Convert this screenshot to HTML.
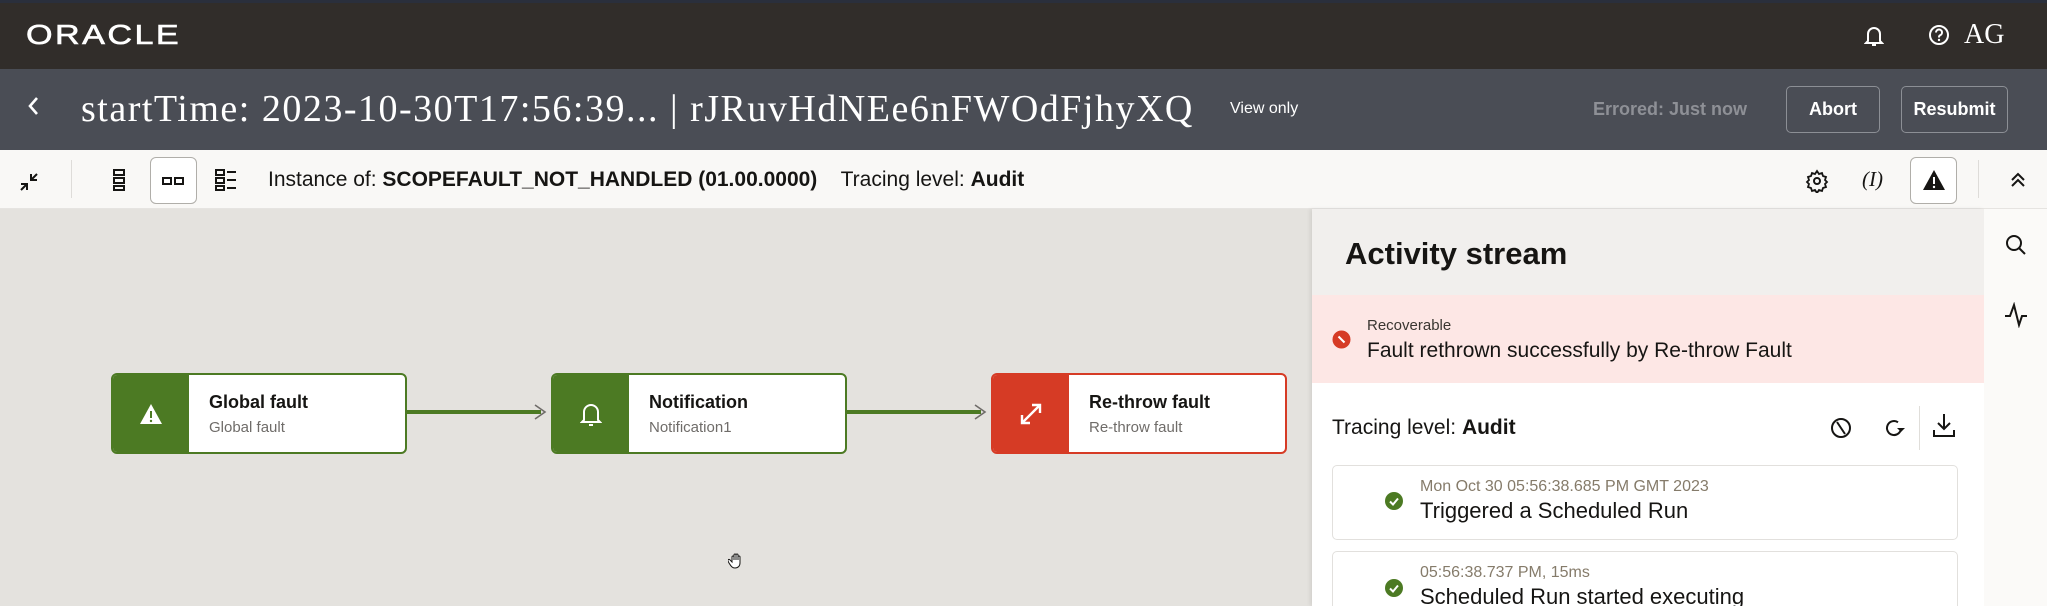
<!DOCTYPE html>
<html><head><meta charset="utf-8"><style>
*{margin:0;padding:0;box-sizing:border-box}
html,body{width:2047px;height:606px;overflow:hidden}
body{font-family:"Liberation Sans",sans-serif;background:#e4e2de;position:relative}
.abs{position:absolute}
#top{left:0;top:0;width:2047px;height:69px;background:#312d2a;border-top:3px solid #2a2f3c}
#bar2{left:0;top:69px;width:2047px;height:81px;background:#4a4d55}
#tool{left:0;top:150px;width:2047px;height:59px;background:#f9f8f6;border-bottom:1px solid #e6e4e1}
.btn{border:1px solid #8c8f95;border-radius:5px;color:#fff;font-weight:bold;font-size:18px;display:flex;align-items:center;justify-content:center}
.node{height:81px;width:296px;background:#fff;border-radius:6px;border:2px solid #4c7a23;overflow:hidden}
.node .ic{position:absolute;left:0;top:0;width:76px;height:100%;background:#4c7a23;display:flex;align-items:center;justify-content:center}
.node .t{position:absolute;left:96px;top:17px;font-weight:bold;font-size:18px;color:#161513}
.node .s{position:absolute;left:96px;top:44px;font-size:15px;color:#6f6c69}
.card{left:1332px;width:626px;background:#fff;border:1px solid #e2e0dd;border-radius:5px}
</style></head><body>
<div id="top" class="abs"></div>
<div class="abs" style="left:26px;top:19px;color:#fff;font-size:28px;letter-spacing:2px;transform:scaleX(1.22);transform-origin:left;-webkit-text-stroke:0.6px #fff">ORACLE</div>
<svg class="abs" style="left:1864px;top:24px" width="20" height="24" viewBox="0 0 20 24"><path d="M4 17V10a6 6 0 0 1 12 0v7l2 2H2z M8 21h4" fill="none" stroke="#fff" stroke-width="2"/></svg>
<svg class="abs" style="left:1928px;top:24px" width="22" height="22" viewBox="0 0 22 22"><circle cx="11" cy="11" r="9" fill="none" stroke="#fff" stroke-width="2"/><path d="M8 8.5a3 3 0 1 1 4 2.8c-1 .4-1 1-1 2.2" fill="none" stroke="#fff" stroke-width="2"/><circle cx="11" cy="16" r="1.2" fill="#fff"/></svg>
<div class="abs" style="left:1964px;top:19px;color:#fff;font-family:'Liberation Serif',serif;font-size:28px">AG</div>

<div id="bar2" class="abs"></div>
<svg class="abs" style="left:26px;top:96px" width="14" height="20" viewBox="0 0 14 20"><path d="M11 2L4 10l7 8" fill="none" stroke="#fff" stroke-width="2.6"/></svg>
<div class="abs" style="left:81px;top:87px;color:#fff;font-family:'Liberation Serif',serif;font-size:38px;letter-spacing:1.5px">startTime: 2023-10-30T17:56:39... | rJRuvHdNEe6nFWOdFjhyXQ</div>
<div class="abs" style="left:1230px;top:100px;color:#fff;font-size:16px">View only</div>
<div class="abs" style="left:1593px;top:99px;color:#8e9096;font-size:18px;font-weight:bold">Errored: Just now</div>
<div class="abs btn" style="left:1786px;top:86px;width:94px;height:47px">Abort</div>
<div class="abs btn" style="left:1901px;top:86px;width:107px;height:47px">Resubmit</div>

<div id="tool" class="abs"></div>
<svg class="abs" style="left:17px;top:170px" width="24" height="24" viewBox="0 0 24 24"><path d="M14 10l6-6M14 4v6h6M10 14l-6 6M4 14h6v6" fill="none" stroke="#161513" stroke-width="2"/></svg>
<div class="abs" style="left:71px;top:160px;width:1px;height:38px;background:#dedcd9"></div>
<svg class="abs" style="left:112px;top:168px" width="14" height="24" viewBox="0 0 14 24"><rect x="2" y="2" width="10" height="5" fill="none" stroke="#161513" stroke-width="2"/><rect x="2" y="10" width="10" height="5" fill="none" stroke="#161513" stroke-width="2"/><rect x="2" y="18" width="10" height="4" fill="none" stroke="#161513" stroke-width="2"/></svg>
<div class="abs" style="left:150px;top:157px;width:47px;height:47px;border:1px solid #b0aea9;border-radius:6px;background:#fff"></div>
<svg class="abs" style="left:161px;top:175px" width="24" height="12" viewBox="0 0 24 12"><rect x="2" y="3" width="8" height="6" fill="none" stroke="#161513" stroke-width="2"/><rect x="14" y="3" width="8" height="6" fill="none" stroke="#161513" stroke-width="2"/></svg>
<svg class="abs" style="left:214px;top:168px" width="26" height="24" viewBox="0 0 26 24"><rect x="2" y="2" width="8" height="5" fill="none" stroke="#161513" stroke-width="2"/><rect x="2" y="10" width="8" height="5" fill="none" stroke="#161513" stroke-width="2"/><rect x="2" y="18" width="8" height="4" fill="none" stroke="#161513" stroke-width="2"/><path d="M13 4h9M13 12h9M13 20h9" stroke="#161513" stroke-width="2"/></svg>
<div class="abs" style="left:268px;top:168px;font-size:21px;color:#161513">Instance of: <b>SCOPEFAULT_NOT_HANDLED (01.00.0000)</b>&nbsp;&nbsp;&nbsp;&nbsp;Tracing level: <b>Audit</b></div>
<svg class="abs" style="left:1805px;top:169px" width="24" height="24" viewBox="0 0 24 24"><circle cx="12" cy="12" r="3" fill="none" stroke="#161513" stroke-width="2"/><path d="M12 2l2 3 3-1 1 3 3 1-1 3 2 2-2 2 1 3-3 1-1 3-3-1-2 3-2-3-3 1-1-3-3-1 1-3-2-2 2-2-1-3 3-1 1-3 3 1z" fill="none" stroke="#161513" stroke-width="1.8"/></svg>
<div class="abs" style="left:1862px;top:167px;font-family:'Liberation Serif',serif;font-style:italic;font-size:21px;color:#161513">(I)</div>
<div class="abs" style="left:1910px;top:157px;width:47px;height:47px;border:1px solid #b0aea9;border-radius:6px;background:#fff"></div>
<svg class="abs" style="left:1922px;top:169px" width="24" height="22" viewBox="0 0 24 22"><path d="M12 1L23 21H1z" fill="#161513"/><path d="M12 8v7" stroke="#fff" stroke-width="2"/><circle cx="12" cy="18" r="1.2" fill="#fff"/></svg>
<div class="abs" style="left:1978px;top:160px;width:1px;height:38px;background:#dedcd9"></div>
<svg class="abs" style="left:2009px;top:171px" width="18" height="18" viewBox="0 0 18 18"><path d="M3 9l6-6 6 6M3 15l6-6 6 6" fill="none" stroke="#161513" stroke-width="2"/></svg>

<div class="abs" style="left:405px;top:410px;width:136px;height:4px;background:#4c7a23"></div>
<svg class="abs" style="left:533px;top:403px" width="14" height="18"><path d="M2 2l10 7-10 7" fill="none" stroke="#6f6c69" stroke-width="1.6"/></svg>
<div class="abs" style="left:845px;top:410px;width:136px;height:4px;background:#4c7a23"></div>
<svg class="abs" style="left:973px;top:403px" width="14" height="18"><path d="M2 2l10 7-10 7" fill="none" stroke="#6f6c69" stroke-width="1.6"/></svg>

<div class="abs node" style="left:111px;top:373px"><div class="ic"><svg width="24" height="22" viewBox="0 0 24 22"><path d="M12 1L23 21H1z" fill="#fff"/><path d="M12 8v7" stroke="#4c7a23" stroke-width="2"/><circle cx="12" cy="18" r="1.2" fill="#4c7a23"/></svg></div><div class="t">Global fault</div><div class="s">Global fault</div></div>
<div class="abs node" style="left:551px;top:373px"><div class="ic"><svg width="22" height="26" viewBox="0 0 22 26"><path d="M4 19V11a7 7 0 0 1 14 0v8l2 2H2z M9 24h4" fill="none" stroke="#fff" stroke-width="2"/></svg></div><div class="t">Notification</div><div class="s">Notification1</div></div>
<div class="abs node" style="left:991px;top:373px;border-color:#d63b25"><div class="ic" style="background:#d63b25"><svg width="26" height="26" viewBox="0 0 26 26"><path d="M4 22L22 4M14 4h8v8" fill="none" stroke="#fff" stroke-width="2.4"/><path d="M4 14v8h8" fill="none" stroke="#fff" stroke-width="2.4"/></svg></div><div class="t">Re-throw fault</div><div class="s">Re-throw fault</div></div>

<svg class="abs" style="left:728px;top:552px" width="18" height="18" viewBox="0 0 18 18"><path d="M4 10V5a1 1 0 0 1 2 0v3V3a1 1 0 0 1 2 0v5V3a1 1 0 0 1 2 0v5V5a1 1 0 0 1 2 0v6c0 3-2 5-5 5s-4-2-6-5l-1-2a1 1 0 0 1 2-1z" fill="#fff" stroke="#161513" stroke-width="1"/></svg>

<div class="abs" style="left:1312px;top:209px;width:672px;height:397px;background:#fff;box-shadow:-2px 0 4px rgba(0,0,0,.08)"></div>
<div class="abs" style="left:1312px;top:209px;width:672px;height:86px;background:#f1efed"></div>
<div class="abs" style="left:1345px;top:236px;font-size:31px;font-weight:bold;color:#161513">Activity stream</div>
<div class="abs" style="left:1312px;top:295px;width:672px;height:88px;background:#fde7e5"></div>
<svg class="abs" style="left:1332px;top:330px" width="19" height="19" viewBox="0 0 19 19"><circle cx="9.5" cy="9.5" r="9" fill="#d63b25"/><path d="M6.5 6.5l6 6" stroke="#fff" stroke-width="2"/></svg>
<div class="abs" style="left:1367px;top:317px;font-size:15px;color:#3a3631">Recoverable</div>
<div class="abs" style="left:1367px;top:339px;font-size:21px;color:#161513">Fault rethrown successfully by Re-throw Fault</div>
<div class="abs" style="left:1332px;top:416px;font-size:21px;color:#161513">Tracing level: <b>Audit</b></div>
<svg class="abs" style="left:1830px;top:417px" width="22" height="22" viewBox="0 0 22 22"><circle cx="11" cy="11" r="9" fill="none" stroke="#161513" stroke-width="2"/><path d="M7 5l8 12" stroke="#161513" stroke-width="2"/></svg>
<svg class="abs" style="left:1883px;top:417px" width="22" height="22" viewBox="0 0 22 22"><path d="M18 11a7 7 0 1 1-3-5.7" fill="none" stroke="#161513" stroke-width="2"/><path d="M14 11h8l-4 4z" fill="#161513"/></svg>
<div class="abs" style="left:1919px;top:406px;width:1px;height:44px;background:#e0deda"></div>
<svg class="abs" style="left:1932px;top:412px" width="24" height="26" viewBox="0 0 24 26"><path d="M12 2v15M6 11l6 6 6-6M2 18v6h20v-6" fill="none" stroke="#161513" stroke-width="2"/></svg>
<div class="abs card" style="top:465px;height:75px"></div>
<svg class="abs" style="left:1385px;top:492px" width="18" height="18" viewBox="0 0 18 18"><circle cx="9" cy="9" r="9" fill="#4c7a23"/><path d="M5 9.5l3 3 5-6" fill="none" stroke="#fff" stroke-width="2"/></svg>
<div class="abs" style="left:1420px;top:478px;font-size:16px;color:#857b6a">Mon Oct 30 05:56:38.685 PM GMT 2023</div>
<div class="abs" style="left:1420px;top:498px;font-size:22px;color:#161513">Triggered a Scheduled Run</div>
<div class="abs card" style="top:551px;height:80px"></div>
<svg class="abs" style="left:1385px;top:579px" width="18" height="18" viewBox="0 0 18 18"><circle cx="9" cy="9" r="9" fill="#4c7a23"/><path d="M5 9.5l3 3 5-6" fill="none" stroke="#fff" stroke-width="2"/></svg>
<div class="abs" style="left:1420px;top:564px;font-size:16px;color:#857b6a">05:56:38.737 PM, 15ms</div>
<div class="abs" style="left:1420px;top:584px;font-size:22px;color:#161513">Scheduled Run started executing</div>

<div class="abs" style="left:1984px;top:209px;width:63px;height:397px;background:#fbfaf8"></div>
<svg class="abs" style="left:2005px;top:234px" width="22" height="22" viewBox="0 0 22 22"><circle cx="9" cy="9" r="7" fill="none" stroke="#161513" stroke-width="2"/><path d="M14 14l6 6" stroke="#161513" stroke-width="2"/></svg>
<svg class="abs" style="left:2004px;top:302px" width="24" height="26" viewBox="0 0 24 26"><path d="M1 14h5l4-11 5 20 3-9h5" fill="none" stroke="#161513" stroke-width="2"/></svg>
</body></html>
